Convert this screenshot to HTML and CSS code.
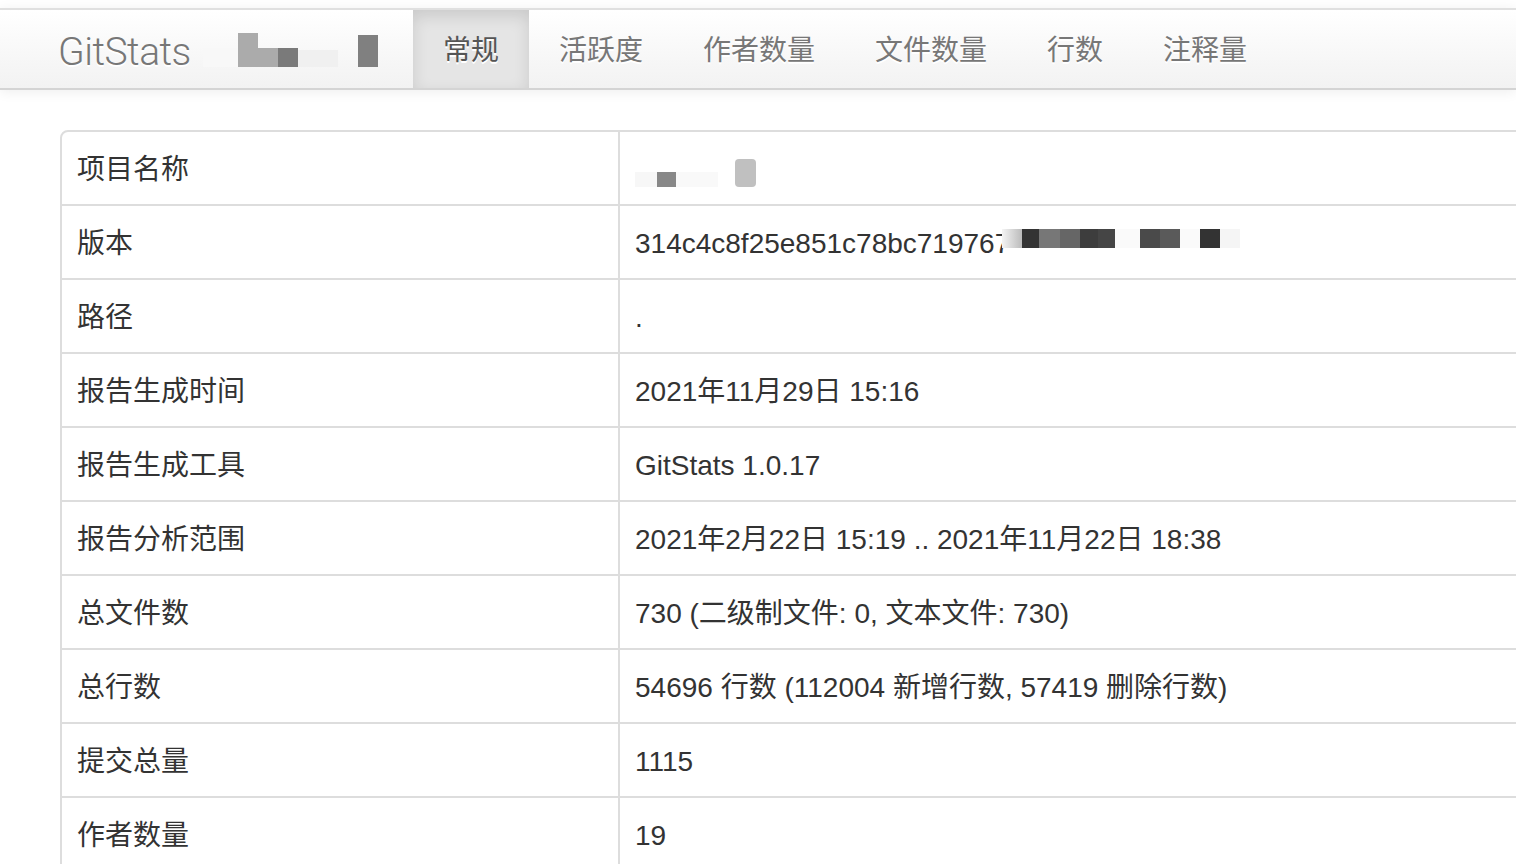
FILE: index.html
```html
<!DOCTYPE html>
<html lang="zh-CN">
<head>
<meta charset="utf-8">
<title>GitStats</title>
<link rel="stylesheet" href="styles.css">
</head>
<body>
<div class="navbar">
  <div class="brand">
    <span class="brand-name">GitStats</span>
    <span class="mosaic brand-mosaic">
      <i class="m b1"></i><i class="m b2"></i><i class="m b3"></i><i class="m b4"></i><i class="m b5"></i><i class="m b6"></i><i class="m b7"></i>
    </span>
  </div>
  <ul class="nav">
    <li class="active"><a>常规</a></li>
    <li><a>活跃度</a></li>
    <li><a>作者数量</a></li>
    <li><a>文件数量</a></li>
    <li><a>行数</a></li>
    <li><a>注释量</a></li>
  </ul>
</div>
<div class="content">
  <table class="stats">
    <tr><td class="label">项目名称</td><td class="value"><span class="mosaic name-mosaic"><i class="m n1"></i><i class="m n2"></i><i class="m n3"></i><i class="m n4"></i><i class="m n5"></i></span></td></tr>
    <tr><td class="label">版本</td><td class="value">314c4c8f25e851c78bc719767<span class="mosaic ver-mosaic"><i class="m v1"></i><i class="m v2"></i><i class="m v3"></i><i class="m v4"></i><i class="m v5"></i><i class="m v6"></i><i class="m v7"></i><i class="m v8"></i><i class="m v9"></i><i class="m v10"></i><i class="m v11"></i><i class="m v12"></i></span></td></tr>
    <tr><td class="label">路径</td><td class="value">.</td></tr>
    <tr><td class="label">报告生成时间</td><td class="value">2021年11月29日 15:16</td></tr>
    <tr><td class="label">报告生成工具</td><td class="value">GitStats 1.0.17</td></tr>
    <tr><td class="label">报告分析范围</td><td class="value">2021年2月22日 15:19 .. 2021年11月22日 18:38</td></tr>
    <tr><td class="label">总文件数</td><td class="value">730 (二级制文件: 0, 文本文件: 730)</td></tr>
    <tr><td class="label">总行数</td><td class="value">54696 行数 (112004 新增行数, 57419 删除行数)</td></tr>
    <tr><td class="label">提交总量</td><td class="value">1115</td></tr>
    <tr><td class="label">作者数量</td><td class="value">19</td></tr>
  </table>
</div>
</body>
</html>
```
FILE: styles.css
```css
html {
  overflow: hidden;
}
body {
  margin: 0;
  padding-top: 8px;
  background: #fff;
  font-family: "Liberation Sans", "Noto Sans CJK SC", sans-serif;
  font-size: 28px;
  line-height: 40px;
  color: #333;
}

.navbar {
  display: flex;
  align-items: stretch;
  height: 78px;
  border-top: 2px solid #e0e0e0;
  border-bottom: 2px solid #d4d4d4;
  background: linear-gradient(to bottom, #ffffff, #f2f2f2);
  box-shadow: 0 2px 12px rgba(0, 0, 0, 0.07);
}

.brand {
  display: flex;
  align-items: center;
  padding-left: 58px;
  margin-right: 35px;
}
.brand-name {
  font-family: "Roboto", "Liberation Sans", sans-serif;
  font-weight: 300;
  font-size: 39px;
  letter-spacing: -0.5px;
  color: #777;
  text-shadow: 0 2px 0 #fff;
  padding-top: 5px;
}

.mosaic {
  display: inline-flex;
  align-items: flex-end;
}
.m {
  display: block;
}
.brand-mosaic {
  height: 34px;
  margin-left: 12px;
  margin-top: 2px;
}
.b1 { width: 35px; height: 19px; background: #f8f8f8; }
.b2 { width: 20px; height: 34px; background: #ababab; }
.b3 { width: 20px; height: 19px; background: #ababab; }
.b4 { width: 20px; height: 19px; background: #7a7a7a; }
.b5 { width: 40px; height: 17px; background: #f0f0f0; }
.b6 { width: 20px; height: 17px; background: transparent; }
.b7 { width: 20px; height: 32px; background: #808080; }

.nav {
  display: flex;
  margin: 0;
  padding: 0;
  list-style: none;
}
.nav li a {
  display: block;
  padding: 3px 30px 0;
  line-height: 75px;
  color: #777;
  text-shadow: 0 2px 0 #fff;
}
.nav li.active a {
  color: #555;
  background: #e5e5e5;
  box-shadow: inset 0 6px 16px rgba(0, 0, 0, 0.12);
}

.content {
  padding: 40px 0 0 60px;
}
.stats {
  width: 1880px;
  border: 2px solid #ddd;
  border-radius: 8px;
  border-collapse: separate;
  border-spacing: 0;
}
.stats td {
  padding: 18px 16px 14px 15px;
  line-height: 40px;
  border-top: 2px solid #ddd;
  vertical-align: top;
  text-align: left;
}
.stats tr:first-child td {
  border-top: 0;
}
.stats td.label {
  width: 525px;
}
.stats td.value {
  border-left: 2px solid #ddd;
}

.name-mosaic {
  vertical-align: -8px;
}
.n1 { width: 22px; height: 15px; background: #f7f7f7; }
.n2 { width: 19px; height: 15px; background: #888; }
.n3 { width: 42px; height: 15px; background: #f9f9f9; }
.n4 { width: 17px; height: 15px; background: transparent; }
.n5 { width: 21px; height: 28px; background: #c0c0c0; border-radius: 4px; }

.ver-mosaic {
  vertical-align: 5px;
  margin-left: -8px;
}
.ver-mosaic .m { height: 19px; }
.v1 { width: 20px; background: linear-gradient(to right, #f4f4f4, #bbb); }
.v2 { width: 17px; background: #333; }
.v3 { width: 21px; background: #777; }
.v4 { width: 20px; background: #666; }
.v5 { width: 18px; background: #3d3d3d; }
.v6 { width: 17px; background: #454545; }
.v7 { width: 25px; background: #fafafa; }
.v8 { width: 20px; background: #4a4a4a; }
.v9 { width: 20px; background: #5a5a5a; }
.v10 { width: 20px; background: #fafafa; }
.v11 { width: 20px; background: #333; }
.v12 { width: 20px; background: #f5f5f5; }
```
